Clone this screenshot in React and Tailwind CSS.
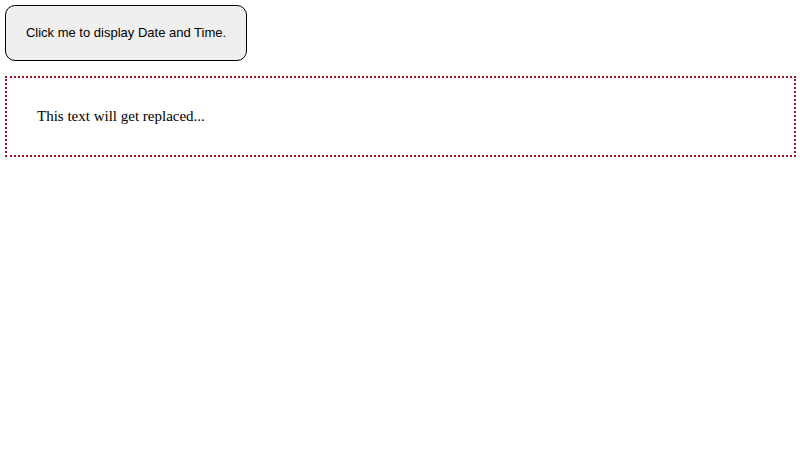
export default function App() {
  return (
    <div className="bg-white min-h-[450px] w-[800px] flex flex-col items-start font-['Liberation_Serif',serif]">
      <button className="ml-[5px] mt-[5px] w-[242px] h-[56px] border border-black rounded-[10px] bg-[#efefef] text-[13px] text-black font-['Liberation_Sans',Arial,sans-serif]">
        Click me to display Date and Time.
      </button>
      <div className="mt-[15px] ml-[5px] w-[791px] h-[81px] border-2 border-dotted border-[#a01020] pl-[30px] flex items-center text-[15px] text-black">
        <p>This text will get replaced...</p>
      </div>
    </div>
  );
}
